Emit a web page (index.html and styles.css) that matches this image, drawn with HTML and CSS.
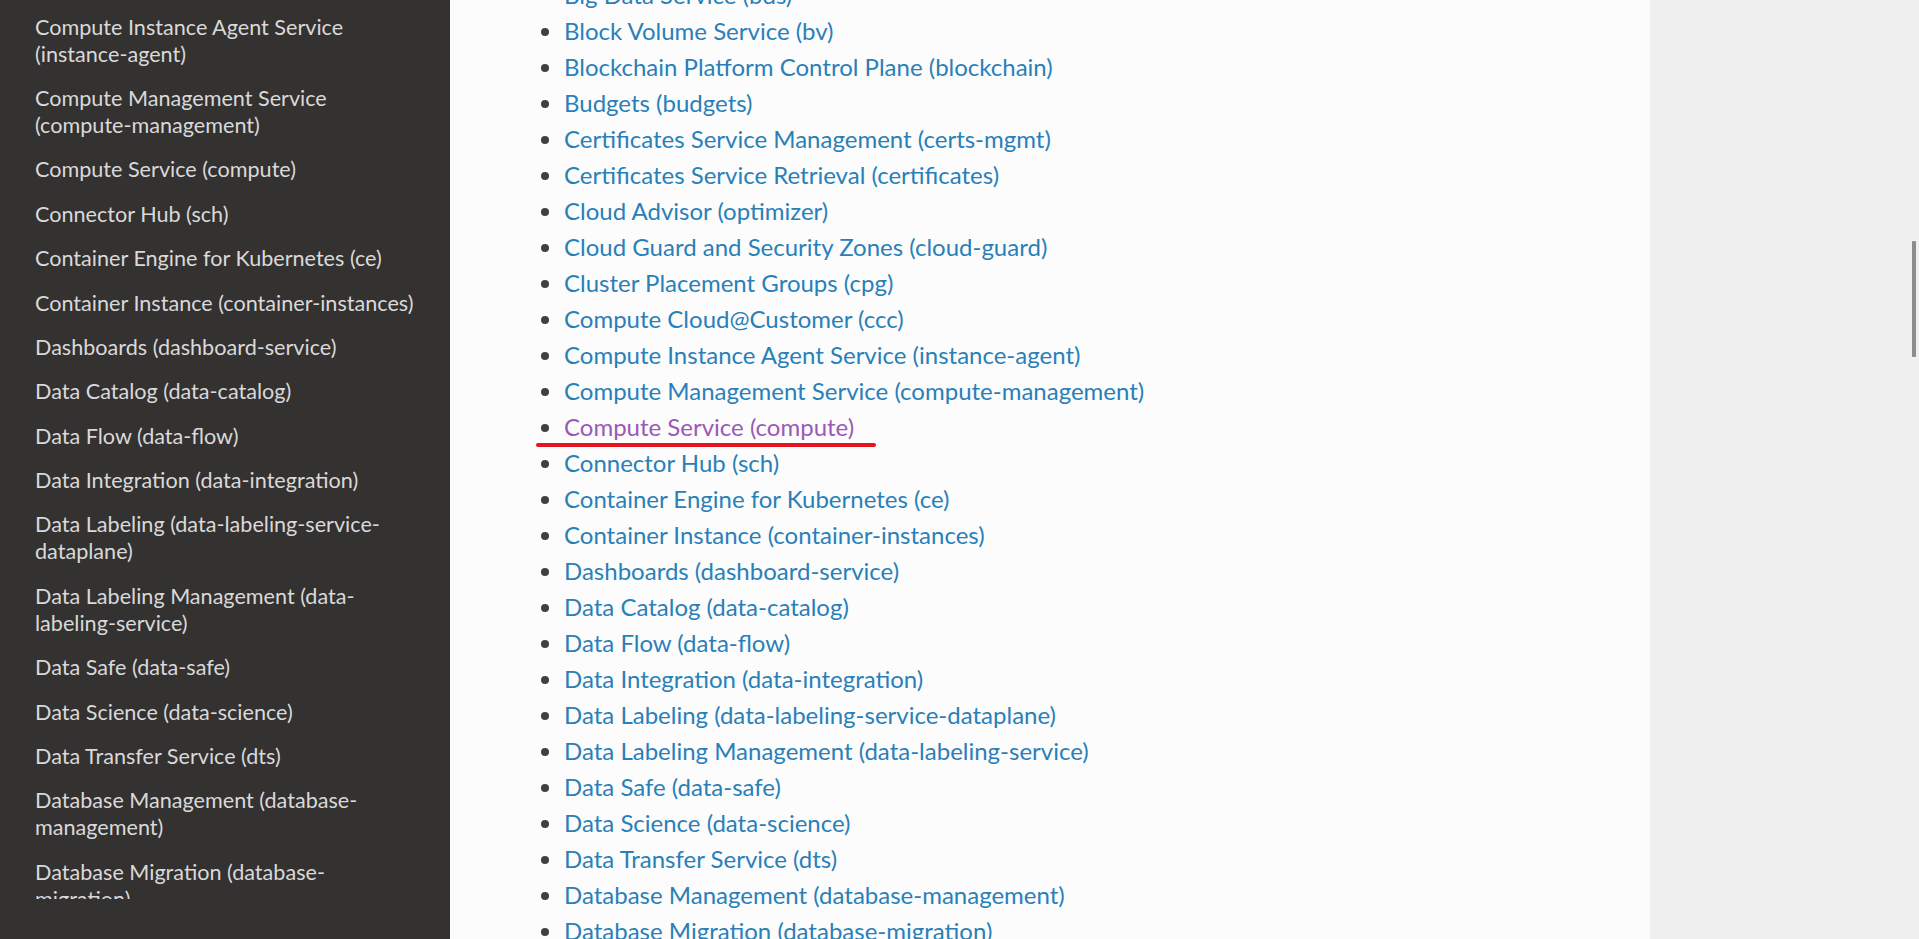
FILE: index.html
```html
<!DOCTYPE html>
<html lang="en">
<head>
    <meta charset="UTF-8">
    <meta name="viewport" content="width=device-width, initial-scale=1.0">
    <title>Services &mdash; OCI CLI Command Reference</title>
    <link rel="stylesheet" href="styles.css">
</head>
<body>
    <div class="page">
        <nav class="side-nav">
            <div class="side-scroll">
                <ul class="menu">
                    <li><a href="#">Compute Instance Agent Service (instance-agent)</a></li>
                    <li><a href="#">Compute Management Service (compute-management)</a></li>
                    <li><a href="#">Compute Service (compute)</a></li>
                    <li><a href="#">Connector Hub (sch)</a></li>
                    <li><a href="#">Container Engine for Kubernetes (ce)</a></li>
                    <li><a href="#">Container Instance (container-instances)</a></li>
                    <li><a href="#">Dashboards (dashboard-service)</a></li>
                    <li><a href="#">Data Catalog (data-catalog)</a></li>
                    <li><a href="#">Data Flow (data-flow)</a></li>
                    <li><a href="#">Data Integration (data-integration)</a></li>
                    <li><a href="#">Data Labeling (data-labeling-service-dataplane)</a></li>
                    <li><a href="#">Data Labeling Management (data-labeling-service)</a></li>
                    <li><a href="#">Data Safe (data-safe)</a></li>
                    <li><a href="#">Data Science (data-science)</a></li>
                    <li><a href="#">Data Transfer Service (dts)</a></li>
                    <li><a href="#">Database Management (database-management)</a></li>
                    <li><a href="#">Database Migration (database-migration)</a></li>
                    <li><a href="#">Database Service (db)</a></li>
                </ul>
            </div>
        </nav>

        <main class="content-wrap">
            <div class="content">
                <ul class="services">
                    <li><a href="#">Big Data Service (bds)</a></li>
                    <li><a href="#">Block Volume Service (bv)</a></li>
                    <li><a href="#">Blockchain Platform Control Plane (blockchain)</a></li>
                    <li><a href="#">Budgets (budgets)</a></li>
                    <li><a href="#">Certificates Service Management (certs-mgmt)</a></li>
                    <li><a href="#">Certificates Service Retrieval (certificates)</a></li>
                    <li><a href="#">Cloud Advisor (optimizer)</a></li>
                    <li><a href="#">Cloud Guard and Security Zones (cloud-guard)</a></li>
                    <li><a href="#">Cluster Placement Groups (cpg)</a></li>
                    <li><a href="#">Compute Cloud@Customer (ccc)</a></li>
                    <li><a href="#">Compute Instance Agent Service (instance-agent)</a></li>
                    <li><a href="#">Compute Management Service (compute-management)</a></li>
                    <li class="marked"><a class="visited" href="#">Compute Service (compute)</a></li>
                    <li><a href="#">Connector Hub (sch)</a></li>
                    <li><a href="#">Container Engine for Kubernetes (ce)</a></li>
                    <li><a href="#">Container Instance (container-instances)</a></li>
                    <li><a href="#">Dashboards (dashboard-service)</a></li>
                    <li><a href="#">Data Catalog (data-catalog)</a></li>
                    <li><a href="#">Data Flow (data-flow)</a></li>
                    <li><a href="#">Data Integration (data-integration)</a></li>
                    <li><a href="#">Data Labeling (data-labeling-service-dataplane)</a></li>
                    <li><a href="#">Data Labeling Management (data-labeling-service)</a></li>
                    <li><a href="#">Data Safe (data-safe)</a></li>
                    <li><a href="#">Data Science (data-science)</a></li>
                    <li><a href="#">Data Transfer Service (dts)</a></li>
                    <li><a href="#">Database Management (database-management)</a></li>
                    <li><a href="#">Database Migration (database-migration)</a></li>
                    <li><a href="#">Database Service (db)</a></li>
                </ul>
            </div>
        </main>

        <div class="scroll-thumb"></div>
    </div>
</body>
</html>
```
FILE: styles.css
```css
body, html {
    margin: 0;
    padding: 0;
    height: 100%;
    overflow: hidden;
}

body {
    font-family: Lato, "Open Sans", "Liberation Sans", sans-serif;
    font-size: 24px;
    color: #404040;
    background: #efefef;
}

a {
    text-decoration: none;
}

.page {
    display: flex;
    height: 939px;
    position: relative;
}

/* left navigation */

.side-nav {
    width: 450px;
    flex: none;
    background: #343131;
    height: 100%;
}

.side-scroll {
    height: 899px;
    overflow: hidden;
}

.menu {
    list-style: none;
    margin: 0;
    padding: 5px 0 0;
}

.menu a {
    display: block;
    font-size: 21.6px;
    line-height: 27px;
    padding: 8.7px 33px 8.7px 35px;
    color: #d9d9d9;
}

/* main column */

.content-wrap {
    flex: none;
    width: 1200px;
    background: #fcfcfc;
    height: 100%;
    overflow: hidden;
}

.content {
    padding: 0 78px;
}

.services {
    margin: -23px 0 0 36px;
    padding: 0;
}

.services li {
    list-style: disc;
    line-height: 36px;
}

.services a {
    color: #2980b9;
}

.services a.visited {
    color: #9b59b6;
}

.marked {
    position: relative;
}

.marked::after {
    content: "";
    position: absolute;
    left: -28px;
    bottom: -2px;
    width: 340px;
    height: 4px;
    border-radius: 2px;
    background: #e5141e;
}

.scroll-thumb {
    position: absolute;
    right: 3px;
    top: 241px;
    width: 4px;
    height: 116px;
    border-radius: 1px;
    background: #8c8c8c;
}
```
